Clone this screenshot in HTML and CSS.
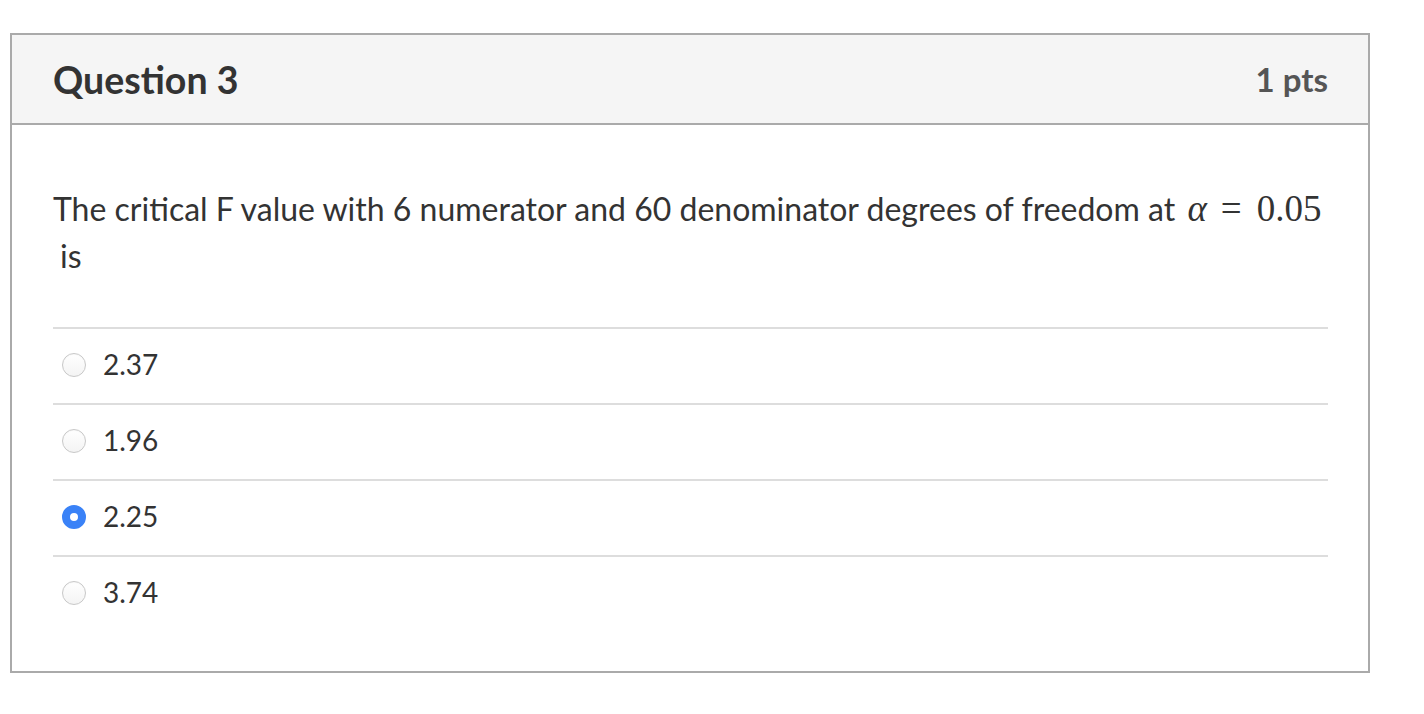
FILE: index.html
```html
<!DOCTYPE html>
<html>
<head>
<meta charset="utf-8">
<link rel="stylesheet" href="styles.css">
</head>
<body>
<div class="question">
  <div class="header">
    <h2 class="title">Question 3</h2>
    <span class="pts">1 pts</span>
  </div>
  <div class="content">
    <p class="text">The critical F value with 6 numerator and 60 denominator degrees of freedom at <span class="math"><i class="alpha">α</i><span class="eq">=</span>0.05</span> <span class="tail">is</span></p>
    <div class="answers">
      <div class="answer"><span class="radio"></span><span class="label">2.37</span></div>
      <div class="answer"><span class="radio"></span><span class="label">1.96</span></div>
      <div class="answer"><span class="radio checked"></span><span class="label">2.25</span></div>
      <div class="answer"><span class="radio"></span><span class="label">3.74</span></div>
    </div>
  </div>
</div>
</body>
</html>
```
FILE: styles.css
```css
html, body {
  margin: 0;
  padding: 0;
  background: #fff;
}
body {
  padding: 33px 0 0 10px;
  font-family: Lato, "Open Sans", sans-serif;
  color: #333;
}
.question {
  width: 1356px;
  border: 2px solid #aaa;
  background: #fff;
}
.header {
  display: flex;
  align-items: center;
  justify-content: space-between;
  height: 88px;
  padding: 0 40px 0 41px;
  background: #f5f5f5;
  border-bottom: 2px solid #aaa;
}
.title {
  margin: 0;
  font-size: 37.5px;
  font-weight: 700;
  color: #333;
}
.pts {
  font-size: 33px;
  font-weight: 700;
  color: #555;
}
.content {
  padding: 60px 40px 40px 41px;
}
.text {
  margin: 0;
  font-size: 32px;
  line-height: 47px;
  color: #333;
}
.math {
  font-family: "Liberation Serif", "DejaVu Serif", serif;
  font-size: 37px;
  white-space: nowrap;
}
.alpha {
  font-style: italic;
  margin-left: 4px;
}
.eq {
  margin: 0 15px 0 14px;
}
.tail {
  display: inline-block;
  margin-left: 7px;
}
.answers {
  margin-top: 48px;
}
.answer {
  display: flex;
  align-items: center;
  height: 74px;
  border-top: 2px solid #ddd;
}
.radio {
  width: 24px;
  height: 24px;
  border-radius: 50%;
  border: 1px solid #c8c8c8;
  background: linear-gradient(#fff, #f4f4f4);
  margin-left: 9px;
  margin-top: -3px;
  box-sizing: border-box;
  box-shadow: inset 0 1px 1px rgba(0,0,0,0.03);
}
.radio.checked {
  border: 8px solid #3a82f7;
  background: #fff;
  box-shadow: none;
}
.label {
  margin-left: 17px;
  margin-top: -4px;
  font-size: 28px;
  color: #333;
}
```
